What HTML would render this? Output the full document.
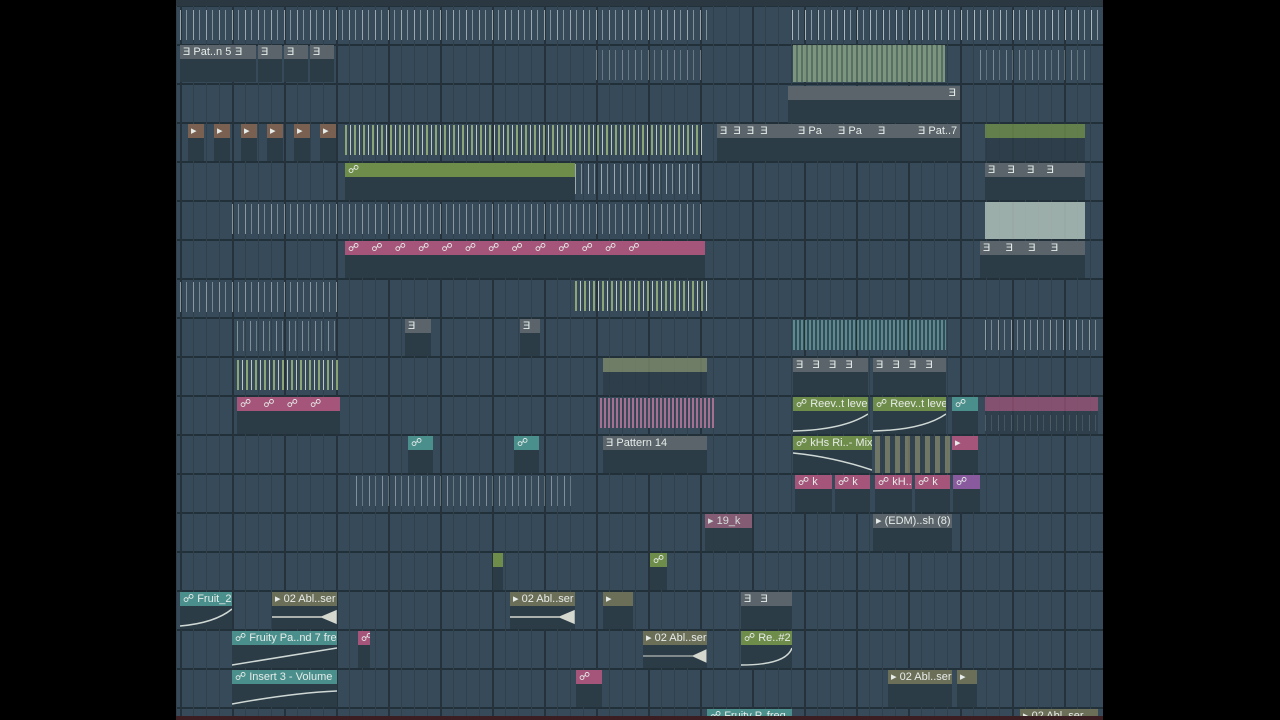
<!DOCTYPE html><html style="overflow:hidden;width:1280px;height:720px"><head><meta charset="utf-8"><style>
*{margin:0;padding:0;box-sizing:border-box}
body{width:1280px;height:720px;background:#000;overflow:hidden;position:relative;font-family:"Liberation Sans",sans-serif}
#pl{position:absolute;left:176px;top:0;width:927px;height:720px;background:#374a59;
background-image:repeating-linear-gradient(90deg,#25323c 0 2px,transparent 2px 52px),repeating-linear-gradient(90deg,#30414c 0 1px,transparent 1px 13px),repeating-linear-gradient(180deg,transparent 0 3px,#22303a 3px 5px,transparent 5px 39px);background-position:4px 0,4px 0,0 2px;overflow:hidden}
#ruler{position:absolute;left:176px;top:0;width:927px;height:6px;background:#2b3841}
#clip{position:absolute;left:0;top:0;width:1280px;height:720px;overflow:hidden}
.c{position:absolute;height:37px;background:#2c3c47;overflow:hidden}
.c .h{height:14px;font-size:11px;line-height:14px;color:#e6ecea;padding-left:3px;white-space:nowrap;overflow:hidden}
.g .h{background:#6f8d4a}.p .h{background:#a5557a}.t .h{background:#4a8f8c}.o .h{background:#6c6f58}.y .h{background:#5a646a}.b .h{background:#7a6050}.v .h{background:#8a5a9e}
.tk{position:absolute;height:30px;background:repeating-linear-gradient(90deg,#c8d4d6 0 1px,transparent 1px 6px,#9fb0b3 6px 7px,transparent 7px 13px)}
.tg{position:absolute;height:30px;background:repeating-linear-gradient(90deg,#9bb57c 0 2px,transparent 2px 5px,#d6dfd0 5px 6px,transparent 6px 9px);opacity:.85}
.curve{position:absolute;left:0;bottom:2px;width:100%;height:20px}
</style></head><body>
<div id="clip">
<div id="pl"></div><div id="ruler"></div>
<div class="tk" style="left:180px;top:10px;width:530px;opacity:.7"></div>
<div class="tk" style="left:792px;top:10px;width:306px;opacity:.8"></div>
<div class="tg" style="left:345px;top:125px;width:360px"></div>
<div class="tk" style="left:575px;top:164px;width:130px;opacity:.7"></div>
<div class="tk" style="left:232px;top:204px;width:473px;opacity:.6"></div>
<div class="tk" style="left:180px;top:282px;width:160px;opacity:.6"></div>
<div class="tg" style="left:575px;top:281px;width:133px"></div>
<div class="tk" style="left:793px;top:320px;width:153px;opacity:.6;background:repeating-linear-gradient(90deg,#6fb8b0 0 2px,transparent 2px 4px)"></div>
<div class="tk" style="left:237px;top:321px;width:103px;opacity:.5"></div>
<div class="tg" style="left:237px;top:360px;width:103px"></div>
<div class="tk" style="left:600px;top:398px;width:115px;opacity:.8;background:repeating-linear-gradient(90deg,#c37aa0 0 2px,transparent 2px 4px)"></div>
<div class="tk" style="left:985px;top:320px;width:113px;opacity:.6"></div>
<div class="tk" style="left:985px;top:415px;width:113px;height:16px;opacity:.7"></div>
<div class="tk" style="left:356px;top:476px;width:220px;opacity:.5"></div>
<div class="tk" style="left:596px;top:50px;width:110px;opacity:.45"></div>
<div class="tk" style="left:980px;top:50px;width:110px;opacity:.45"></div>
<div class="c y" style="left:180px;top:45px;width:52px"><div class="h">Ǝ Pat..n 5</div></div>
<div class="c y" style="left:232px;top:45px;width:24px"><div class="h">Ǝ</div></div>
<div class="c y" style="left:258px;top:45px;width:24px"><div class="h">Ǝ</div></div>
<div class="c y" style="left:284px;top:45px;width:24px"><div class="h">Ǝ</div></div>
<div class="c y" style="left:310px;top:45px;width:24px"><div class="h">Ǝ</div></div>
<div class="c" style="left:793px;top:45px;width:152px;background:repeating-linear-gradient(90deg,#8ea888 0 3px,#5f7a66 3px 5px);opacity:.8"></div>
<div class="c y" style="left:788px;top:86px;width:172px"><div class="h" style="text-align:right;padding-right:4px">Ǝ</div></div>
<div class="c b" style="left:188px;top:124px;width:16px"><div class="h">▸</div></div>
<div class="c b" style="left:214px;top:124px;width:16px"><div class="h">▸</div></div>
<div class="c b" style="left:241px;top:124px;width:16px"><div class="h">▸</div></div>
<div class="c b" style="left:267px;top:124px;width:16px"><div class="h">▸</div></div>
<div class="c b" style="left:294px;top:124px;width:16px"><div class="h">▸</div></div>
<div class="c b" style="left:320px;top:124px;width:16px"><div class="h">▸</div></div>
<div class="c y" style="left:717px;top:124px;width:78px"><div class="h">Ǝ &nbsp;Ǝ &nbsp;Ǝ &nbsp;Ǝ</div></div>
<div class="c y" style="left:795px;top:124px;width:40px"><div class="h">Ǝ Pa</div></div>
<div class="c y" style="left:835px;top:124px;width:40px"><div class="h">Ǝ Pa</div></div>
<div class="c y" style="left:875px;top:124px;width:40px"><div class="h">Ǝ</div></div>
<div class="c y" style="left:915px;top:124px;width:45px"><div class="h">Ǝ Pat..7</div></div>
<div class="c g" style="left:985px;top:124px;width:100px;opacity:.8"><div class="h"></div></div>
<div class="c g" style="left:345px;top:163px;width:230px"><div class="h">☍</div></div>
<div class="c y" style="left:985px;top:163px;width:100px"><div class="h">Ǝ &nbsp;&nbsp;&nbsp;Ǝ &nbsp;&nbsp;&nbsp;Ǝ &nbsp;&nbsp;&nbsp;Ǝ</div></div>
<div class="c" style="left:985px;top:202px;width:100px;background:#aebfb8;opacity:.85"></div>
<div class="c p" style="left:345px;top:241px;width:360px"><div class="h">☍ &nbsp;&nbsp;&nbsp;☍ &nbsp;&nbsp;&nbsp;☍ &nbsp;&nbsp;&nbsp;☍ &nbsp;&nbsp;&nbsp;☍ &nbsp;&nbsp;&nbsp;☍ &nbsp;&nbsp;&nbsp;☍ &nbsp;&nbsp;&nbsp;☍ &nbsp;&nbsp;&nbsp;☍ &nbsp;&nbsp;&nbsp;☍ &nbsp;&nbsp;&nbsp;☍ &nbsp;&nbsp;&nbsp;☍ &nbsp;&nbsp;&nbsp;☍</div></div>
<div class="c y" style="left:980px;top:241px;width:105px"><div class="h">Ǝ &nbsp;&nbsp;&nbsp;&nbsp;Ǝ &nbsp;&nbsp;&nbsp;&nbsp;Ǝ &nbsp;&nbsp;&nbsp;&nbsp;Ǝ</div></div>
<div class="c y" style="left:405px;top:319px;width:26px"><div class="h">Ǝ</div></div>
<div class="c y" style="left:520px;top:319px;width:20px"><div class="h">Ǝ</div></div>
<div class="c y" style="left:603px;top:358px;width:104px;opacity:.8"><div class="h" style="background:#7d8a6a"></div></div>
<div class="c y" style="left:793px;top:358px;width:75px"><div class="h">Ǝ &nbsp;&nbsp;Ǝ &nbsp;&nbsp;Ǝ &nbsp;&nbsp;Ǝ</div></div>
<div class="c y" style="left:873px;top:358px;width:73px"><div class="h">Ǝ &nbsp;&nbsp;Ǝ &nbsp;&nbsp;Ǝ &nbsp;&nbsp;Ǝ</div></div>
<div class="c p" style="left:237px;top:397px;width:103px"><div class="h">☍ &nbsp;&nbsp;&nbsp;☍ &nbsp;&nbsp;&nbsp;☍ &nbsp;&nbsp;&nbsp;☍</div></div>
<div class="c g" style="left:793px;top:397px;width:75px"><div class="h">☍ Reev..t level</div><svg class="curve"><path d="M0 19 Q50 18 75 2" stroke="#cfd8d4" fill="none" stroke-width="1.5"/></svg></div>
<div class="c g" style="left:873px;top:397px;width:73px"><div class="h">☍ Reev..t level</div><svg class="curve"><path d="M0 19 Q50 18 73 2" stroke="#cfd8d4" fill="none" stroke-width="1.5"/></svg></div>
<div class="c t" style="left:952px;top:397px;width:26px"><div class="h">☍</div></div>
<div class="c p" style="left:985px;top:397px;width:113px;opacity:.7"><div class="h"></div></div>
<div class="c t" style="left:408px;top:436px;width:25px"><div class="h">☍</div></div>
<div class="c t" style="left:514px;top:436px;width:25px"><div class="h">☍</div></div>
<div class="c y" style="left:603px;top:436px;width:104px"><div class="h">Ǝ Pattern 14</div></div>
<div class="c g" style="left:793px;top:436px;width:79px"><div class="h">☍ kHs Ri..- Mix</div><svg class="curve"><path d="M0 2 Q40 6 79 19" stroke="#cfd8d4" fill="none" stroke-width="1.5"/></svg></div>
<div class="c" style="left:875px;top:436px;width:75px;background:repeating-linear-gradient(90deg,#8a8a6a 0 5px,#2f3f4a 5px 10px);opacity:.7"></div>
<div class="c p" style="left:952px;top:436px;width:26px"><div class="h">▸</div></div>
<div class="c p" style="left:795px;top:475px;width:37px"><div class="h">☍ k</div></div>
<div class="c p" style="left:835px;top:475px;width:35px"><div class="h">☍ k</div></div>
<div class="c p" style="left:875px;top:475px;width:37px"><div class="h">☍ kH..</div></div>
<div class="c p" style="left:915px;top:475px;width:35px"><div class="h">☍ k</div></div>
<div class="c v" style="left:953px;top:475px;width:27px"><div class="h">☍</div></div>
<div class="c p" style="left:705px;top:514px;width:47px;opacity:.9"><div class="h" style="background:#8d6078">▸ 19_k</div></div>
<div class="c y" style="left:873px;top:514px;width:79px"><div class="h">▸ (EDM)..sh (8)</div></div>
<div class="c g" style="left:493px;top:553px;width:10px"><div class="h"></div></div>
<div class="c g" style="left:650px;top:553px;width:17px"><div class="h">☍</div></div>
<div class="c t" style="left:180px;top:592px;width:52px"><div class="h">☍ Fruit_2</div><svg class="curve"><path d="M0 19 Q35 16 52 2" stroke="#cfd8d4" fill="none" stroke-width="1.5"/></svg></div>
<div class="c o" style="left:272px;top:592px;width:65px"><div class="h">▸ 02 Abl..ser</div><svg class="curve"><path d="M0 10 L50 10 L64 4 L64 16 L50 10" stroke="#d4d8cf" fill="#d4d8cf" stroke-width="1.5"/></svg></div>
<div class="c o" style="left:510px;top:592px;width:65px"><div class="h">▸ 02 Abl..ser</div><svg class="curve"><path d="M0 10 L50 10 L64 4 L64 16 L50 10" stroke="#d4d8cf" fill="#d4d8cf" stroke-width="1.5"/></svg></div>
<div class="c o" style="left:603px;top:592px;width:30px"><div class="h">▸</div></div>
<div class="c y" style="left:741px;top:592px;width:51px"><div class="h">Ǝ &nbsp;&nbsp;Ǝ</div></div>
<div class="c t" style="left:232px;top:631px;width:105px"><div class="h">☍ Fruity Pa..nd 7 freq</div><svg class="curve"><path d="M0 19 L105 2" stroke="#cfd8d4" fill="none" stroke-width="1.5"/></svg></div>
<div class="c p" style="left:358px;top:631px;width:12px"><div class="h">☍</div></div>
<div class="c o" style="left:643px;top:631px;width:64px"><div class="h">▸ 02 Abl..ser</div><svg class="curve"><path d="M0 10 L50 10 L63 4 L63 16 L50 10" stroke="#d4d8cf" fill="#d4d8cf"/></svg></div>
<div class="c g" style="left:741px;top:631px;width:51px"><div class="h">☍ Re..#2</div><svg class="curve"><path d="M0 19 Q45 19 51 2" stroke="#cfd8d4" fill="none" stroke-width="1.5"/></svg></div>
<div class="c t" style="left:232px;top:670px;width:105px"><div class="h">☍ Insert 3 - Volume</div><svg class="curve"><path d="M0 19 Q60 8 105 6" stroke="#cfd8d4" fill="none" stroke-width="1.5"/></svg></div>
<div class="c p" style="left:576px;top:670px;width:26px"><div class="h">☍</div></div>
<div class="c o" style="left:888px;top:670px;width:64px"><div class="h">▸ 02 Abl..ser</div></div>
<div class="c o" style="left:957px;top:670px;width:20px"><div class="h">▸</div></div>
<div class="c t" style="left:707px;top:709px;width:85px;height:11px"><div class="h">☍ Fruity P..freq</div></div>
<div class="c o" style="left:1020px;top:709px;width:78px;height:11px"><div class="h">▸ 02 Abl..ser</div></div>
<div style="position:absolute;left:176px;top:716px;width:927px;height:4px;background:#3a1e22"></div>
</div>
</body></html>
